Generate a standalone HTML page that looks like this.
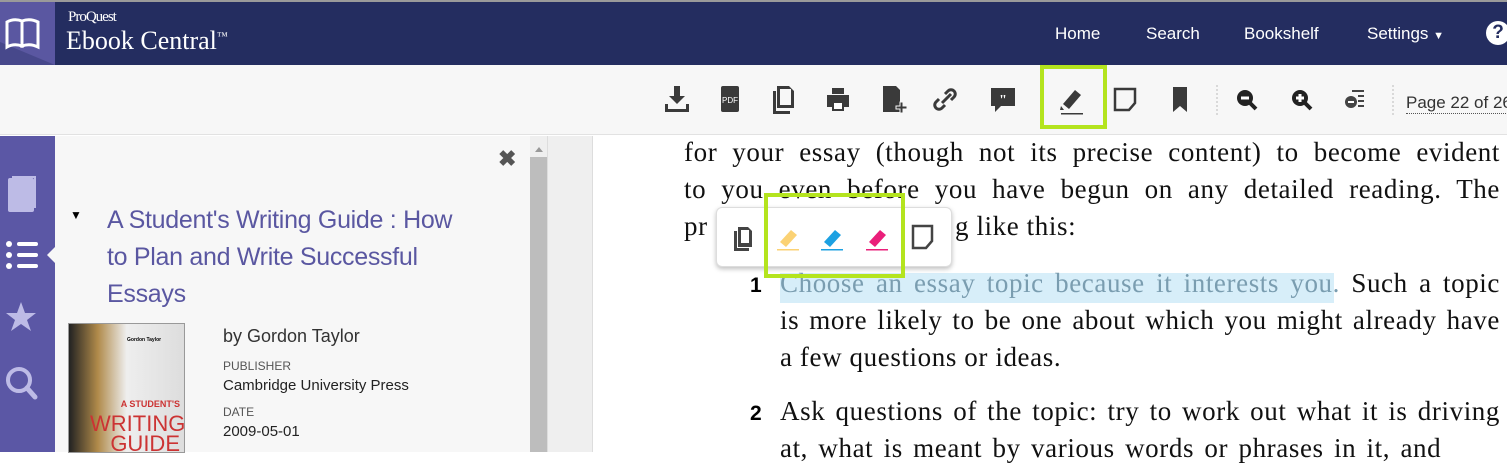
<!DOCTYPE html>
<html><head><meta charset="utf-8"><style>
*{margin:0;padding:0;box-sizing:border-box}
body{width:1507px;height:452px;overflow:hidden;position:relative;background:#fff;font-family:"Liberation Sans",sans-serif}
.a{position:absolute}
.nav{color:#fff;font-size:17px;top:24px}
.serif{font-family:"Liberation Serif",serif;font-size:27px;letter-spacing:0.6px;color:#111;white-space:nowrap}
.j{white-space:normal;text-align:justify;text-align-last:justify;height:34px;overflow:hidden}
</style></head><body>
<div class="a" style="left:0;top:0;width:1507px;height:2px;background:#9a9a9a"></div>
<div class="a" style="left:0;top:2px;width:1507px;height:63px;background:#242d60"></div>
<div class="a" style="left:0;top:2px;width:55px;height:63px;background:#5a57a1"></div>
<svg class="a" style="left:0;top:2px" width="55" height="63"><polygon points="0,40 55,63 0,63" fill="#242d60" opacity=".35"/>
<path d="M7 20 Q14 16 22 19 L22 44 Q14 41 7 45Z M22 19 Q30 16 38 20 L38 45 Q30 41 22 44Z" fill="none" stroke="#fff" stroke-width="3"/></svg>
<div class="a" style="left:68px;top:9px;color:#fff;font-family:'Liberation Serif',serif;font-size:15px;letter-spacing:-1px">ProQuest</div>
<div class="a" style="left:66px;top:26px;color:#fff;font-family:'Liberation Serif',serif;font-size:26px">Ebook Central<sup style="font-size:11px">™</sup></div>
<div class="a nav" style="left:1055px">Home</div>
<div class="a nav" style="left:1146px">Search</div>
<div class="a nav" style="left:1244px">Bookshelf</div>
<div class="a nav" style="left:1367px">Settings <span style="font-size:11px">▼</span></div>
<div class="a" style="left:1486px;top:21px;width:24px;height:24px;border-radius:50%;background:#fff;color:#242d60;font-weight:bold;font-size:19px;text-align:center;line-height:24px">?</div>

<div class="a" style="left:0;top:65px;width:1507px;height:70px;background:#f7f7f7;border-bottom:1px solid #e2e2e2"></div>
<svg class="a" style="left:660px;top:80px" width="847" height="40" fill="#3a3a3a">
<path d="M14 6h6v10h5l-8 8-8-8h5z M5 24h3v5h18v-5h3v8H5z"/>
<rect x="61" y="6" width="18" height="26" rx="2"/><text x="70" y="23" font-size="8" fill="#fff" text-anchor="middle" font-family="Liberation Sans">PDF</text>
<path d="M117 6h12l5 5v17h-17z M113 11h3v20h14v3h-17z" /><rect x="120" y="9" width="11" height="16" fill="#f7f7f7"/>
<path d="M172 8h12v6h-12z M167 15h22v12h-22z"/><rect x="173" y="22" width="10" height="8" fill="#fff" stroke="#3a3a3a" stroke-width="2"/>
<path d="M223 6h13l4 4v22h-17z"/><path d="M240 22h3v4h4v3h-4v4h-3v-4h-4v-3h4z" stroke="#f7f7f7" stroke-width="1"/>
<path d="M282 23l9-9 M279 19l-3 3a4 4 0 0 0 6 6l3-3 M285 14l3-3a4 4 0 0 1 6 6l-3 3" stroke="#3a3a3a" stroke-width="3" fill="none"/>
<path d="M331 8h24v18h-14l-6 6v-6h-4z"/><text x="343" y="24" font-size="14" fill="#fff" text-anchor="middle" font-weight="bold" font-family="Liberation Serif">"</text>
<path d="M403 24l12-14 6 5-12 14z M401 26l3 4h-4z"/><rect x="401" y="33" width="22" height="1.5"/>
<path d="M455 9h20v14l-6 7h-14z" fill="none" stroke="#3a3a3a" stroke-width="2.5"/>
<path d="M513 7h14v25l-7-6-7 6z"/>
<line x1="557" y1="5" x2="557" y2="35" stroke="#bbb" stroke-dasharray="2 2"/>
<circle cx="585" cy="18" r="8" fill="#222"/><rect x="581" y="16.5" width="8" height="3" fill="#fff"/><path d="M590 23l6 6" stroke="#222" stroke-width="4"/>
<circle cx="640" cy="18" r="8" fill="#222"/><path d="M636 18h8M640 14v8" stroke="#fff" stroke-width="3"/><path d="M645 23l6 6" stroke="#222" stroke-width="4"/>
<circle cx="691" cy="22" r="6" fill="#444"/><path d="M688 22h6" stroke="#fff" stroke-width="2"/><path d="M692 11h12M698 16h6M698 21h6M698 26h6" stroke="#444" stroke-width="2"/>
<line x1="733" y1="5" x2="733" y2="35" stroke="#bbb" stroke-dasharray="2 2"/>
</svg>
<div class="a" style="left:1040px;top:65px;width:67px;height:64px;border:4px solid #b4e41e"></div>
<div class="a" style="left:1406px;top:93px;font-size:17px;color:#333;border-bottom:1px dotted #555;white-space:nowrap">Page 22 of 26</div>

<div class="a" style="left:0;top:136px;width:55px;height:316px;background:#5b57a5"></div>
<svg class="a" style="left:0;top:136px" width="60" height="316" fill="#bdbbe6">
<rect x="8" y="42" width="26" height="34" rx="2"/><path d="M12 40h24v32h-2v-30h-22z"/>
<circle cx="9" cy="108" r="3" fill="#fff"/><circle cx="9" cy="119" r="3" fill="#fff"/><circle cx="9" cy="130" r="3" fill="#fff"/>
<path d="M19 108h17M19 119h17M19 130h17" stroke="#fff" stroke-width="4" stroke-linecap="round"/>
<polygon points="55,111 47,119 55,127" fill="#f7f7f7"/>
<polygon points="21,166 25,177 36,177 27,184 31,195 21,188 11,195 15,184 6,177 17,177"/>
<circle cx="19" cy="244" r="11" fill="none" stroke="#bdbbe6" stroke-width="4"/><path d="M27 252l8 9" stroke="#bdbbe6" stroke-width="5" stroke-linecap="round"/>
</svg>
<div class="a" style="left:55px;top:136px;width:475px;height:316px;background:#f7f7f7"></div>
<div class="a" style="left:498px;top:146px;font-size:22px;color:#555;font-weight:bold">✖</div>
<div class="a" style="left:530px;top:136px;width:17px;height:316px;background:#efefef"></div>
<div class="a" style="left:530px;top:157px;width:17px;height:295px;background:#bdbdbd"></div>
<div class="a" style="left:535px;top:143px;border:4px solid transparent;border-bottom:5px solid #999;width:0;height:0"></div>
<div class="a" style="left:547px;top:136px;width:46px;height:316px;background:#efefef;border-left:1px solid #ddd;border-right:1px solid #ddd"></div>
<div class="a" style="left:70px;top:208px;font-size:12px">▼</div>
<div class="a" style="left:107px;top:202px;font-size:25px;line-height:37px;color:#5a57a1;width:365px;letter-spacing:-0.3px">A Student's Writing Guide : How to Plan and Write Successful Essays</div>
<div class="a" style="left:68px;top:323px;width:117px;height:130px;border:1px solid #999;background:linear-gradient(90deg,#222 0,#b08a4a 25%,#eee 50%,#ddd 100%);padding:4px"></div>
<div class="a" style="left:127px;top:337px;font-size:5px;font-weight:bold">Gordon Taylor</div>
<div class="a" style="left:90px;top:390px;font-size:22px;color:#c33;line-height:20px;text-align:right;width:90px"><span style="font-size:9px;font-weight:bold">A STUDENT'S</span><br>WRITING<br>GUIDE</div>
<div class="a" style="left:223px;top:326px;font-size:18px;color:#333">by Gordon Taylor</div>
<div class="a" style="left:223px;top:359px;font-size:12px;color:#555">PUBLISHER</div>
<div class="a" style="left:223px;top:377px;font-size:15px;color:#222">Cambridge University Press</div>
<div class="a" style="left:223px;top:405px;font-size:12px;color:#555">DATE</div>
<div class="a" style="left:223px;top:423px;font-size:15px;color:#222">2009-05-01</div>

<div class="a serif j" style="left:684px;top:137px;width:816px">for your essay (though not its precise content) to become evident</div>
<div class="a serif j" style="left:684px;top:174px;width:816px">to you even before you have begun on any detailed reading. The</div>
<div class="a serif" style="left:684px;top:211px">pr</div>
<div class="a serif" style="left:955px;top:211px">g like this:</div>
<div class="a" style="left:780px;top:273px;width:554px;height:30px;background:#d7eef9"></div>
<div class="a" style="left:750px;top:274px;font-size:21px;font-weight:bold">1</div>
<div class="a serif j" style="left:780px;top:268px;width:720px"><span style="color:#7a9db0">Choose an essay topic because it interests you.</span> Such a topic</div>
<div class="a serif j" style="left:780px;top:305px;width:720px">is more likely to be one about which you might already have</div>
<div class="a serif" style="left:780px;top:342px">a few questions or ideas.</div>
<div class="a" style="left:750px;top:402px;font-size:21px;font-weight:bold">2</div>
<div class="a serif j" style="left:780px;top:396px;width:720px">Ask questions of the topic: try to work out what it is driving</div>
<div class="a serif" style="left:780px;top:433px;word-spacing:3px">at, what is meant by various words or phrases in it, and</div>

<div class="a" style="left:716px;top:207px;width:236px;height:60px;background:#fff;border:1px solid #ddd;border-radius:6px;box-shadow:0 2px 5px rgba(0,0,0,.25)"></div>
<svg class="a" style="left:716px;top:207px" width="236" height="60">
<path d="M22 20h10l4 4v16h-14z M18 24h3v17h12v3h-15z" fill="#444"/><rect x="25" y="23" width="8" height="13" fill="#fff"/>
<g fill="#fbd274"><path d="M64 35l11-12 6 5-11 12z"/><rect x="61" y="42" width="22" height="1.5"/></g>
<g fill="#1da1e2"><path d="M108 35l11-12 6 5-11 12z"/><rect x="105" y="42" width="22" height="1.5"/></g>
<g fill="#ea1f7a"><path d="M153 35l11-12 6 5-11 12z"/><rect x="150" y="42" width="22" height="1.5"/></g>
<path d="M197 19h19v15l-6 7h-13z" fill="none" stroke="#444" stroke-width="2.5"/>
</svg>
<div class="a" style="left:764px;top:193px;width:141px;height:85px;border:4px solid #b4e41e"></div>
</body></html>
